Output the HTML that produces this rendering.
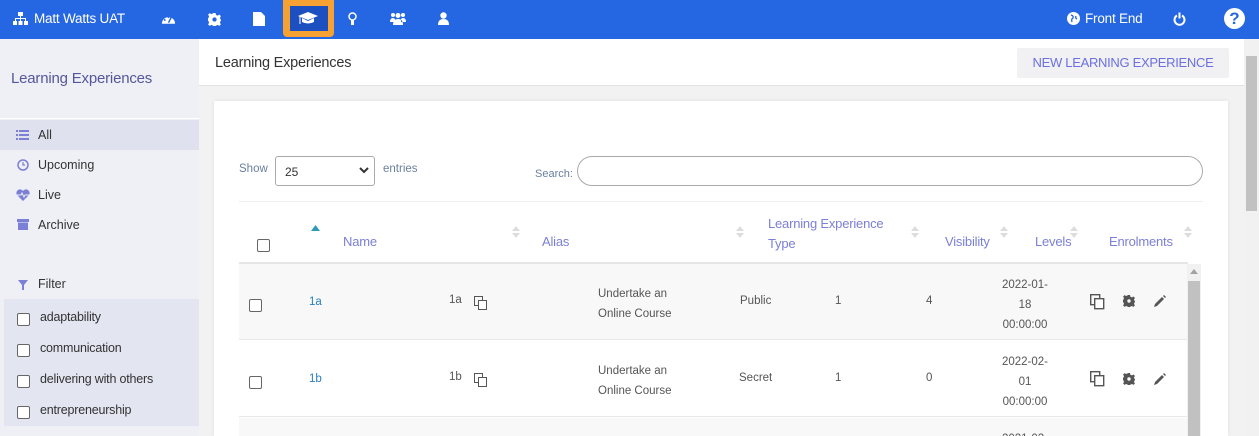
<!DOCTYPE html>
<html><head><meta charset="utf-8"><style>
*{box-sizing:border-box;margin:0;padding:0}
html,body{width:1259px;height:436px;overflow:hidden}
body{font-family:"Liberation Sans",sans-serif;background:#f2f2f2;position:relative}
.a{position:absolute}
.top{left:0;top:0;width:1259px;height:39px;background:#2566e2;color:#fff}
.top .t{font-size:13.5px;top:11px;letter-spacing:-0.2px}
.side{left:0;top:39px;width:199px;height:397px;background:#eef0f5}
.it{left:0;width:199px;height:30px;font-size:12.5px;color:#333;padding:8px 0 0 38px}
.cb{width:13px;height:13px;border:1px solid #666;border-radius:2px;background:#fff}
.fl{left:4px;width:195px;height:31px;font-size:12.5px;color:#333;padding:8px 0 0 36px;letter-spacing:-0.2px}
.h{color:#7b7fd6;font-size:13px;letter-spacing:-0.2px}
.c{font-size:11.5px;color:#555}
.sort{width:8px;height:14px}
</style></head><body>
<div class="a top">
  <svg class="a" style="left:13px;top:12px" width="15" height="14" viewBox="0 0 15 14" fill="#fff"><rect x="5" y="0" width="5" height="4"/><rect x="7" y="4" width="1" height="3"/><rect x="2" y="6" width="11" height="1"/><rect x="2" y="6" width="1" height="3"/><rect x="12" y="6" width="1" height="3"/><rect x="7" y="6" width="1" height="3"/><rect x="0" y="9" width="4" height="4"/><rect x="5.5" y="9" width="4" height="4"/><rect x="11" y="9" width="4" height="4"/></svg>
  <div class="a t" style="left:34px">Matt Watts UAT</div>
  <svg class="a" style="left:161px;top:13px" width="15" height="12" viewBox="0 0 16 12"><path d="M1 11A7 7 0 1 1 15 11Z" fill="#fff"/><path d="M8 10L11 4" stroke="#2566e2" stroke-width="1.5"/><circle cx="4" cy="7" r="1" fill="#2566e2"/><circle cx="8" cy="4" r="1" fill="#2566e2"/></svg>
  <svg class="a" style="left:208px;top:13px" width="13" height="13" viewBox="0 0 12 12"><use href="#gearw"/></svg>
  <svg class="a" style="left:253px;top:12px" width="12" height="14" viewBox="0 0 12 14"><path d="M0 0H8L12 4V14H0Z" fill="#fff"/></svg>
  <div class="a" style="left:283px;top:0;width:51px;height:37px;background:#f6a132;border-radius:0 0 4px 4px"></div>
  <div class="a" style="left:290px;top:6px;width:38px;height:25px;background:#1c4fbf"></div>
  <svg class="a" style="left:298px;top:12px" width="20" height="13" viewBox="0 0 20 13" fill="#fff"><path d="M10 0L20 4L10 8L0 4Z"/><path d="M4 6V10Q10 13 16 10V6L10 9Z"/><rect x="1.5" y="4" width="1" height="8"/></svg>
  <svg class="a" style="left:348px;top:12px" width="9" height="14" viewBox="0 0 9 14"><circle cx="4.5" cy="4.5" r="3.5" fill="none" stroke="#fff" stroke-width="1.5"/><rect x="3" y="8" width="3" height="5" fill="#fff"/></svg>
  <svg class="a" style="left:390px;top:12px" width="16" height="13" viewBox="0 0 16 13" fill="#fff"><circle cx="3" cy="3" r="2"/><circle cx="13" cy="3" r="2"/><circle cx="8" cy="3.5" r="2.5"/><path d="M0 10Q0 6 3 6Q5 6 5 8V10Z M16 10Q16 6 13 6Q11 6 11 8V10Z M3 13Q3 7 8 7Q13 7 13 13Z"/></svg>
  <svg class="a" style="left:438px;top:12px" width="11" height="13" viewBox="0 0 11 13" fill="#fff"><circle cx="5.5" cy="3.5" r="3.2"/><path d="M0 13Q0 7 5.5 7Q11 7 11 13Z"/></svg>
  <svg class="a" style="left:1067px;top:12px" width="13" height="13" viewBox="0 0 13 13"><circle cx="6.5" cy="6.5" r="6.5" fill="#fff"/><path d="M4 3Q7 4 6 6Q4 7 5 10M9 4Q8 6 10 7" stroke="#2566e2" stroke-width="1.3" fill="none"/></svg>
  <div class="a t" style="left:1085px">Front End</div>
  <svg class="a" style="left:1173px;top:12px" width="13" height="14" viewBox="0 0 13 14"><path d="M4 3.5A5 5 0 1 0 9 3.5" stroke="#fff" stroke-width="2" fill="none"/><rect x="5.5" y="0.5" width="2" height="6" fill="#fff"/></svg>
  <div class="a" style="left:1224px;top:8px;width:21px;height:21px;border-radius:50%;background:#fff;color:#2566e2;font-weight:bold;font-size:17px;text-align:center;line-height:21px">?</div>
</div>

<div class="a side">
  <div class="a" style="left:11px;top:31px;font-size:15px;color:#55579a;letter-spacing:-0.2px">Learning Experiences</div>
  <div class="a" style="left:0;top:79px;width:199px;height:1px;background:#fff"></div>
  <div class="a it" style="top:81px;background:#dfe2ee">All</div>
  <div class="a it" style="top:111px">Upcoming</div>
  <div class="a it" style="top:141px">Live</div>
  <div class="a it" style="top:171px">Archive</div>
  <svg class="a" style="left:16px;top:91px" width="13" height="10" viewBox="0 0 13 10" fill="#7b7fd6"><rect width="2" height="2"/><rect x="3" width="10" height="2"/><rect y="4" width="2" height="2"/><rect x="3" y="4" width="10" height="2"/><rect y="8" width="2" height="2"/><rect x="3" y="8" width="10" height="2"/></svg>
  <svg class="a" style="left:17px;top:120px" width="12" height="12" viewBox="0 0 12 12"><circle cx="6" cy="6" r="5" stroke="#7b7fd6" stroke-width="1.5" fill="none"/><path d="M6 3V6H8" stroke="#7b7fd6" stroke-width="1.2" fill="none"/></svg>
  <svg class="a" style="left:16px;top:150px" width="14" height="12" viewBox="0 0 14 12"><path d="M7 12L1 6A3.3 3.3 0 0 1 7 2A3.3 3.3 0 0 1 13 6Z" fill="#7b7fd6"/><path d="M1 6H5L6 4L8 8L9 6H13" stroke="#eef0f5" fill="none"/></svg>
  <svg class="a" style="left:17px;top:180px" width="12" height="11" viewBox="0 0 12 11" fill="#7b7fd6"><rect width="12" height="3"/><rect x="1" y="3.5" width="10" height="7.5"/></svg>
  <svg class="a" style="left:18px;top:241px" width="10" height="10" viewBox="0 0 10 10"><path d="M0 0H10L6 5V10H4V5Z" fill="#7b7fd6"/></svg>
  <div class="a" style="left:38px;top:238px;font-size:12.5px;color:#333">Filter</div>
  <div class="a" style="left:4px;top:260px;width:195px;height:127px;background:#e3e5f1"></div>
  <div class="a fl" style="top:263px">adaptability</div>
  <div class="a fl" style="top:294px">communication</div>
  <div class="a fl" style="top:325px">delivering with others</div>
  <div class="a fl" style="top:356px">entrepreneurship</div>
  <div class="a cb" style="left:17px;top:274px"></div>
  <div class="a cb" style="left:17px;top:305px"></div>
  <div class="a cb" style="left:17px;top:336px"></div>
  <div class="a cb" style="left:17px;top:367px"></div>
</div>

<div class="a" style="left:199px;top:39px;width:1045px;height:47px;background:#fff;border-bottom:1px solid #e2e2e2"></div>
<div class="a" style="left:215px;top:55px;font-size:14.5px;color:#333;letter-spacing:-0.2px">Learning Experiences</div>
<div class="a" style="left:1017px;top:48px;width:212px;height:30px;background:#f1f1f3;border-radius:2px;color:#6b6fe0;font-size:13px;letter-spacing:-0.3px;text-align:center;line-height:30px;white-space:nowrap">NEW LEARNING EXPERIENCE</div>
<div class="a" style="left:1244px;top:39px;width:15px;height:397px;background:#f1f1f1"></div>
<div class="a" style="left:1246px;top:56px;width:11px;height:155px;background:#c1c1c1"></div>

<div class="a" style="left:214px;top:101px;width:1014px;height:335px;background:#fff;box-shadow:0 0 4px rgba(0,0,0,.08)"></div>
<div class="a c" style="left:239px;top:163px;color:#6a7fa0">Show</div>
<div class="a" style="left:275px;top:156px;width:100px;height:30px;border:1px solid #aaa;border-radius:3px;font-size:12px;color:#333;padding:8px 0 0 9px">25</div>
<svg class="a" style="left:359px;top:167px" width="10" height="7" viewBox="0 0 10 7"><path d="M1 1L5 5L9 1" stroke="#333" stroke-width="2" fill="none"/></svg>
<div class="a c" style="left:383px;top:163px;color:#6a7fa0">entries</div>
<div class="a" style="left:535px;top:168px;font-size:11px;color:#6a7fa0">Search:</div>
<div class="a" style="left:577px;top:156px;width:626px;height:30px;border:1px solid #aaa;border-radius:15px"></div>
<div class="a" style="left:239px;top:201px;width:964px;height:1px;background:#eee"></div>

<div class="a cb" style="left:257px;top:239px"></div>
<svg class="a" style="left:311px;top:225px" width="9" height="6"><path d="M0 6L4.5 0L9 6Z" fill="#2f9ab4"/></svg>
<div class="a h" style="left:343px;top:234px">Name</div>
<div class="a h" style="left:542px;top:234px">Alias</div>
<div class="a h" style="left:768px;top:214px;line-height:20px">Learning Experience<br>Type</div>
<div class="a h" style="left:945px;top:234px">Visibility</div>
<div class="a h" style="left:1035px;top:234px">Levels</div>
<div class="a h" style="left:1109px;top:234px">Enrolments</div>
<svg width="0" height="0" style="position:absolute"><defs><g id="s"><path d="M0 6L4 1L8 6Z M0 8L4 13L8 8Z" fill="#ddd"/></g>
<g id="gearw"><path fill="#fff" fill-rule="evenodd" d="M5 0H7L7.4 1.8L8.9 2.4L10.5 1.5L11.9 2.9L11 4.5L11.6 6L12 6V7L11.6 7.4L11 8.9L11.9 10.5L10.5 11.9L8.9 11L7.4 11.6L7 12H5L4.6 11.6L3.1 11L1.5 11.9L0.1 10.5L1 8.9L0.4 7.4L0 7V5L0.4 4.6L1 3.1L0.1 1.5L1.5 0.1L3.1 1L4.6 0.4Z M6 4A2 2 0 1 0 6 8A2 2 0 1 0 6 4Z"/></g></defs></svg>
<svg class="a sort" style="left:512px;top:225px"><use href="#s"/></svg>
<svg class="a sort" style="left:736px;top:225px"><use href="#s"/></svg>
<svg class="a sort" style="left:911px;top:225px"><use href="#s"/></svg>
<svg class="a sort" style="left:1000px;top:225px"><use href="#s"/></svg>
<svg class="a sort" style="left:1070px;top:225px"><use href="#s"/></svg>
<svg class="a sort" style="left:1184px;top:225px"><use href="#s"/></svg>
<div class="a" style="left:239px;top:262px;width:949px;height:2px;background:#e6e6e6"></div>

<div class="a" style="left:239px;top:264px;width:948px;height:76px;background:#f8f8f8;border-bottom:1px solid #e8e8e8"></div>
<div class="a" style="left:239px;top:341px;width:948px;height:76px;background:#fff;border-bottom:1px solid #e8e8e8"></div>
<div class="a" style="left:239px;top:418px;width:948px;height:18px;background:#f8f8f8"></div>
<div class="a" style="left:1187px;top:264px;width:14px;height:172px;background:#f1f1f1"></div>
<div class="a" style="left:1188px;top:281px;width:12px;height:155px;background:#c1c1c1"></div>
<svg class="a" style="left:1190px;top:269px" width="8" height="5"><path d="M0 5L4 0L8 5Z" fill="#a3a3a3"/></svg>

<div class="a cb" style="left:249px;top:299px"></div>
<div class="a cb" style="left:249px;top:376px"></div>
<div class="a c" style="left:309px;top:296px;color:#2a7fc0">1a</div>
<div class="a c" style="left:309px;top:373px;color:#2a7fc0">1b</div>
<div class="a c" style="left:449px;top:294px">1a</div>
<div class="a c" style="left:449px;top:371px">1b</div>
<svg width="0" height="0" style="position:absolute"><defs><g id="cp"><rect x="0.5" y="0.5" width="8" height="9" fill="none" stroke="#555"/><rect x="4.5" y="4.5" width="8" height="9" fill="#fff" stroke="#555"/></g><g id="cp2"><rect x="0.7" y="0.7" width="9" height="10" fill="none" stroke="#555" stroke-width="1.4"/><rect x="4.7" y="4.7" width="9" height="10" fill="#fff" stroke="#555" stroke-width="1.4"/></g>
<g id="gear"><path fill="#555" fill-rule="evenodd" d="M5 0H7L7.4 1.8L8.9 2.4L10.5 1.5L11.9 2.9L11 4.5L11.6 6L12 6V7L11.6 7.4L11 8.9L11.9 10.5L10.5 11.9L8.9 11L7.4 11.6L7 12H5L4.6 11.6L3.1 11L1.5 11.9L0.1 10.5L1 8.9L0.4 7.4L0 7V5L0.4 4.6L1 3.1L0.1 1.5L1.5 0.1L3.1 1L4.6 0.4Z M6 4.3A1.7 1.7 0 1 0 6 7.7A1.7 1.7 0 1 0 6 4.3Z"/></g>
<g id="pen"><path d="M1 12L2 9L9 2L11 4L4 11Z" fill="#555"/><path d="M10 1L11 0L13 2L12 3Z" fill="#555"/></g></defs></svg>
<svg class="a" style="left:474px;top:296px" width="14" height="15"><use href="#cp"/></svg>
<svg class="a" style="left:474px;top:373px" width="14" height="15"><use href="#cp"/></svg>
<div class="a c" style="left:598px;top:284px;line-height:20px">Undertake an<br>Online Course</div>
<div class="a c" style="left:598px;top:361px;line-height:20px">Undertake an<br>Online Course</div>
<div class="a c" style="left:740px;top:295px">Public</div>
<div class="a c" style="left:739px;top:372px">Secret</div>
<div class="a c" style="left:835px;top:295px">1</div>
<div class="a c" style="left:835px;top:372px">1</div>
<div class="a c" style="left:926px;top:295px">4</div>
<div class="a c" style="left:926px;top:372px">0</div>
<div class="a c" style="left:990px;top:275px;width:70px;text-align:center;line-height:20px">2022-01-<br>18<br>00:00:00</div>
<div class="a c" style="left:990px;top:352px;width:70px;text-align:center;line-height:20px">2022-02-<br>01<br>00:00:00</div>
<div class="a c" style="left:990px;top:429px;width:70px;text-align:center;line-height:20px">2021-02-</div>
<svg class="a" style="left:1090px;top:294px" width="15" height="16"><use href="#cp2"/></svg>
<svg class="a" style="left:1090px;top:371px" width="15" height="16"><use href="#cp2"/></svg>
<svg class="a" style="left:1123px;top:295px" width="12" height="12"><use href="#gear"/></svg>
<svg class="a" style="left:1123px;top:373px" width="12" height="12"><use href="#gear"/></svg>
<svg class="a" style="left:1153px;top:295px" width="13" height="13"><use href="#pen"/></svg>
<svg class="a" style="left:1153px;top:373px" width="13" height="13"><use href="#pen"/></svg>
</body></html>
